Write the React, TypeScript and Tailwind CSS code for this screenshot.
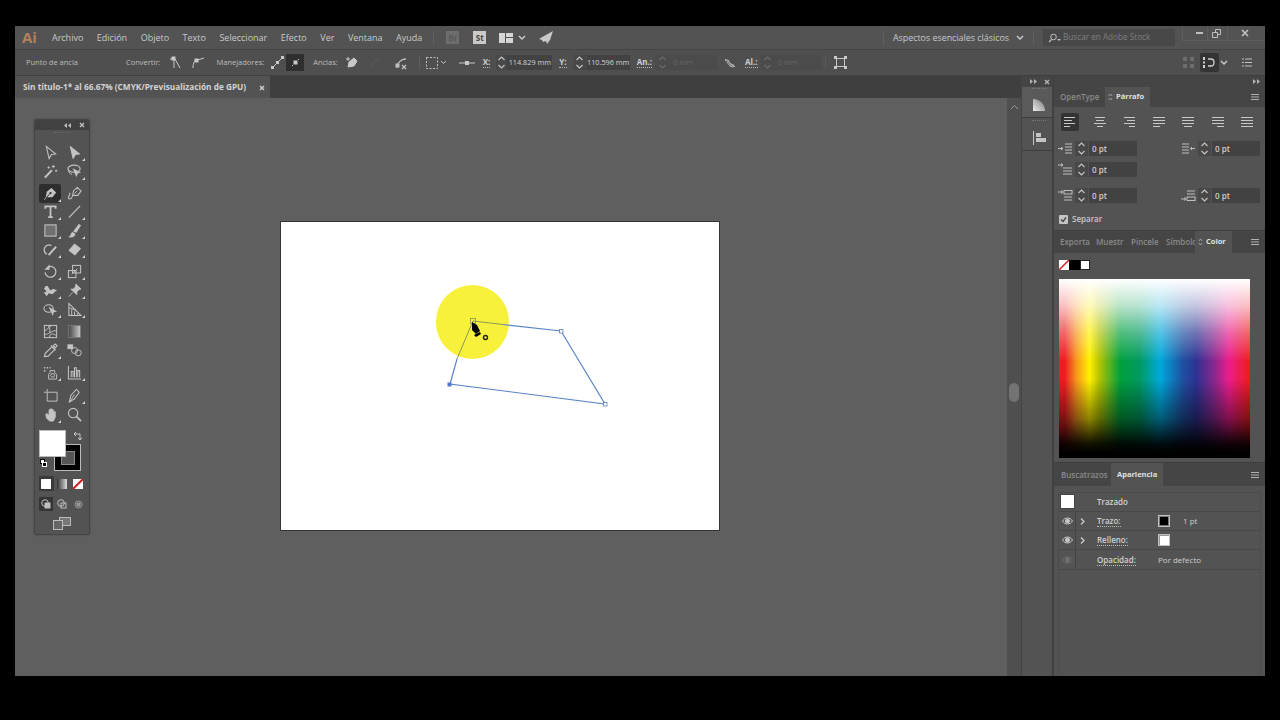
import React from "react";

const S = ({ w = 16, h = 16, vb, className = "", children }: { w?: number; h?: number; vb?: string; className?: string; children: React.ReactNode }) => (
  <svg width={w} height={h} viewBox={vb ?? `0 0 ${w} ${h}`} fill="none" stroke="currentColor" strokeWidth="1" className={`shrink-0 ${className}`}>
    {children}
  </svg>
);

const tools: { p: React.ReactNode; c?: boolean }[][] = [
  [
    { p: <path d="M3.500 1.500l10 8-4.500.6L6.500 14.500z" strokeWidth="1.100" /> },
    { p: <path d="M3.500 1.500l10 8-4.500.6L6.500 14.500z" fill="currentColor" />, c: true },
  ],
  [
    { p: <><path d="M2 14.500L9.500 6.500" strokeWidth="2.200" /><path d="M11 1v3.500M9.300 2.700h3.500M14 6v2.500M12.800 7.200h2.500M6 2.500v2.500M4.800 3.700h2.500" /></> },
    { p: <><ellipse cx="7.500" cy="5" rx="6.500" ry="3.800" strokeWidth="1.200" /><path d="M1.500 6c0 3 2 5 4 5" /><path d="M6 4.500l9 4.500-3.500 1.200-1.500 4z" fill="currentColor" stroke="none" /></>, c: true },
  ],
  [
    { p: <><path d="M3 12l1-6 5-4 5 5-4 5z" fill="currentColor" stroke="none" /><path d="M1.500 14.500l5.500-6.500" stroke="#c4c4c4" /><path d="M3.500 12.500L7.500 8" stroke="#2e2e2e" /><circle cx="8" cy="7.500" r="1.200" fill="#2e2e2e" stroke="none" /></>, c: true },
    { p: <><path d="M6 10l1-5 4-3.500 4 4-3.500 4.500z" strokeWidth="1.100" /><path d="M6 11c-2 4-5 3-4.500 1s2-2 1.500-5" strokeWidth="1.100" /><path d="M8 8l3-3" /></> },
  ],
  [
    { p: <path d="M2.500 5V2.500h11V5M8 2.500V14M5.500 14h5" strokeWidth="1.900" />, c: true },
    { p: <path d="M2 14.500L14 2" strokeWidth="1.300" />, c: true },
  ],
  [
    { p: <rect x="2" y="2" width="12" height="12" fill="#707070" strokeWidth="1.100" />, c: true },
    { p: <><path d="M6.500 9L12.500 1 15 2.500 10 10.500z" fill="currentColor" stroke="none" /><path d="M6 9.500c-3 1-1 4-5 5.500 4 1 8 0 8-3.500z" fill="currentColor" stroke="none" /></>, c: true },
  ],
  [
    { p: <><path d="M9 3.800A5 5 0 1 0 4 13" strokeWidth="1.400" /><path d="M6 14l8-9" strokeWidth="2.200" /></>, c: true },
    { p: <><path d="M1.500 9L8 1.500 15 7l-6.500 7.500z" fill="currentColor" stroke="none" /></>, c: true },
  ],
  [
    { p: <><path d="M5.500 3a5.800 5.800 0 1 1-3.300 6" strokeWidth="1.300" /><path d="M7 .5V6H1.500z" fill="currentColor" stroke="none" /></>, c: true },
    { p: <><rect x="1.500" y="7" width="8" height="7.500" strokeWidth="1.100" /><rect x="6" y="1.500" width="8.500" height="8" strokeWidth="1.100" /><path d="M5 11l6-6" /></>, c: true },
  ],
  [
    { p: <path d="M1 6c2-4 4-4 5-1l2 3 3-2 4 2-2 1-3 3-4-1-2 3-3-4 3-1-2-2z" fill="currentColor" stroke="none" />, c: true },
    { p: <path d="M9.500 1l5.500 5.500-2 .5-2.500 2.500v3L4 6.500h3l2-2.500zM6 10l-4 4.500" fill="currentColor" strokeWidth=".8" />, c: true },
  ],
  [
    { p: <><ellipse cx="6" cy="7" rx="5" ry="4" strokeWidth="1.100" /><path d="M6 5l9 5-3.500 1-1 4z" fill="currentColor" stroke="none" /></>, c: true },
    { p: <><path d="M2 1.500v13h13L2 1.500z" strokeWidth="1.100" /><path d="M5 8v6M8 10v4M11 12v2M2 6l8 3" /></>, c: true },
  ],
  [
    { p: <><rect x="1.500" y="1.500" width="13" height="13" strokeWidth="1.100" /><path d="M2 7c3 0 4-5 7-5M2 11c5 0 5-3 12-4M7 14c0-4 3-4 7-2M6 2c1 3 2 4 1 7" /></> },
    { p: <rect x="1.500" y="1.500" width="13" height="13" fill="url(#tg)" stroke="#777" /> },
  ],
  [
    { p: <path d="M1.500 14.500l1-3.500 7-7 3 3-7 7zM8.500 2.500l5 5M11 3l2-2 2 2-2 2z" strokeWidth="1.200" />, c: true },
    { p: <><rect x="1" y="2" width="5" height="4" fill="currentColor" /><circle cx="8" cy="8" r="3.200" /><circle cx="12" cy="10.500" r="3.200" /></> },
  ],
  [
    { p: <><path d="M1 3h1.500M4 3h1.500M1 6h1.500M7 3h1" strokeWidth="1.600" /><path d="M7.500 6h5v2l2 2v5H6v-5l1.500-2z" /><circle cx="10.300" cy="11" r="2" /></>, c: true },
    { p: <path d="M1.500 1v14H15M4.500 13V7h2v6M8 13V3h2v10M11.500 13V6h2v7" strokeWidth="1.100" />, c: true },
  ],
  [
    { p: <><path d="M4.500 1v3" /><path d="M1 4.500h3.500" /><path d="M4.500 4.500L15 4.500V14H4.500z" strokeWidth="1" /></> },
    { p: <><path d="M2.500 15l1.500-7 6-6.500 3 3-5 7z" strokeWidth="1.100" /><path d="M8 7l-5.500 8" /></>, c: true },
  ],
  [
    { p: <path d="M3 8l1 4 3 3h4l2-4V5l-1 0-1 3V3h-1l-.5 4V2H8l-.5 5V3h-1v6L4 7z" fill="currentColor" />, c: true },
    { p: <><circle cx="6.500" cy="6.500" r="5" strokeWidth="1.200" /><path d="M10 10l5 5" strokeWidth="1.800" /></> },
  ],
];

function ToolRow({ row, mt, active }: { row: { p: React.ReactNode; c?: boolean }[]; mt: string; active?: boolean }) {
  return (
    <div className={`flex h-[19px] items-center justify-center gap-[2px] ${mt}`}>
      {row.map((t, i) => (
        <div key={i} className={`relative flex h-[19px] w-[22px] items-center justify-center rounded-[2px] text-[#c4c4c4] ${active && i === 0 ? "bg-[#2e2e2e]" : ""}`}>
          <S vb="0 0 16 16" w={15} h={15}>{t.p}</S>
          {t.c && <span className="absolute bottom-[1px] right-0 h-0 w-0 border-b-[3px] border-l-[3px] border-b-[#d0d0d0] border-l-transparent" />}
        </div>
      ))}
    </div>
  );
}

const Spin = ({ muted }: { muted?: boolean }) => (
  <S w={9} h={15} className={muted ? "text-[#6c6c6c]" : "text-[#c4c4c4]"}>
    <path d="M1.500 5L4.500 2l3 3M1.500 10l3 3 3-3" strokeWidth="1.200" />
  </S>
);

const TabSpin = () => (
  <S w={5} h={8} className="mr-[3px] text-[#bbb]"><path d="M.8 3L2.500 1l1.700 2M.8 5l1.700 2 1.700-2" strokeWidth=".8" /></S>
);

const menus = ["Archivo", "Edición", "Objeto", "Texto", "Seleccionar", "Efecto", "Ver", "Ventana", "Ayuda"];

function MenuBar() {
  return (
    <div className="flex h-[24px] shrink-0 items-center border-b border-b-[#444] bg-[#535353] pl-[7px] text-[9px] text-[#c8c8c8]">
      <span className="mr-[15px] text-[15px] font-bold leading-none text-[#b5805a]">Ai</span>
      <div className="flex gap-[13.500px]">
        {menus.map((m) => <span key={m}>{m}</span>)}
      </div>
      <div className="ml-[11px] mr-[12px] h-[14px] w-px bg-[#606060]" />
      <div className="flex h-[13px] w-[13px] items-center justify-center bg-[#6d6d6d] text-[8px] font-bold text-[#585858]">Br</div>
      <div className="ml-[14px] flex h-[13px] w-[13px] items-center justify-center bg-[#c9c9c9] text-[8px] font-bold text-[#444]">St</div>
      <S w={14} h={10} className="ml-[13px] text-[#d5d5d5]"><path d="M0 0h6v10H0zM7 0h7v4H7zM7 5h7v5H7z" fill="currentColor" stroke="none" /></S>
      <S w={8} h={6} className="ml-[5px] text-[#d0d0d0]"><path d="M1 1l3 3 3-3" strokeWidth="1.300" /></S>
      <S w={14} h={13} className="ml-[13px] text-[#c8c8c8]"><path d="M0 8l5-3 9-5-3 9-3 4-1-3-3 1-1-2z" fill="currentColor" stroke="none" /></S>
      <div className="flex-1" />
      <div className="mr-[9px] h-[14px] w-px bg-[#606060]" />
      <span className="text-[8.900px]">Aspectos esenciales clásicos</span>
      <S w={8} h={6} className="ml-[7px] mr-[1px] text-[#d0d0d0]"><path d="M1 1l3 3 3-3" strokeWidth="1.300" /></S>
      <div className="ml-[8px] mr-[9px] h-[14px] w-px bg-[#606060]" />
      <div className="flex h-[17px] w-[132px] items-center rounded-[2px] border border-[#474747] bg-[#484848] pl-[4px] text-[8.200px] text-[#7f7f7f]">
        <S w={14} h={10} className="mr-[1px] text-[#c0c0c0]"><circle cx="5.500" cy="4" r="2.800" /><path d="M3.500 6.500L1 9" strokeWidth="1.300" /><path d="M9 6h4l-2 2z" fill="currentColor" stroke="none" /></S>
        Buscar en Adobe Stock
      </div>
      <div className="ml-[7px] flex h-[15px] self-start border-b border-l border-[#5d5d5d]">
        <div className="flex w-[24px] items-center justify-center pl-[9px]"><span className="h-[2px] w-[7px] bg-[#c0c0c0]" /></div>
        <div className="flex w-[20px] items-center justify-center border-l border-[#5d5d5d] pr-[3px]"><S w={9} h={9} className="text-[#c0c0c0]"><path d="M.5 3.500h5v5h-5zM3.500 3V.5h5v5H6" /></S></div>
        <div className="flex w-[38px] items-center justify-center border-l border-[#5d5d5d] pr-[4px]"><S w={8} h={8} className="text-[#c4c4c4]"><path d="M1 1l6 6M7 1L1 7" strokeWidth="1.500" /></S></div>
      </div>
    </div>
  );
}

const NumField = ({ v, w }: { v: string; w: string }) => (
  <div className={`flex h-[15px] ${w} items-center justify-center whitespace-nowrap bg-[#424242] text-[7.300px] text-[#d4d4d4]`}>{v}</div>
);
const U = ({ t }: { t: string }) => (
  <span className="border-b border-dotted border-[#bbb] text-[8px] font-bold leading-[10px] text-[#cfcfcf]">{t}</span>
);

function ControlBar() {
  return (
    <div className="flex h-[26px] shrink-0 items-center border-b border-b-[#3f3f3f] bg-[#4f4f4f] text-[7.500px] text-[#bdbdbd]">
      <span className="ml-[11px] w-[100px]">Punto de ancla</span>
      <span>Convertir:</span>
      <S w={12} h={13} className="ml-[9px] text-[#c8c8c8]"><path d="M5 12V2M1 3h5l5 9" /><rect x="3" y="1" width="3" height="3" fill="currentColor" /></S>
      <S w={13} h={13} className="ml-[10px] text-[#c8c8c8]"><path d="M2 12c0-6 2-8 5-8l6-2" /><rect x="4" y="3" width="3" height="3" fill="currentColor" /></S>
      <span className="ml-[12px]">Manejadores:</span>
      <div className="ml-[4px] flex h-[17px] w-[18px] items-center justify-center text-[#c8c8c8]"><S w={13} h={13}><path d="M1 12L12 1" /><rect x="5" y="5" width="3" height="3" fill="currentColor" stroke="none" /><rect x="0" y="10" width="3" height="3" fill="currentColor" stroke="none" /><rect x="10" y="0" width="3" height="3" fill="currentColor" stroke="none" /></S></div>
      <div className="flex h-[17px] w-[18px] items-center justify-center bg-[#2f2f2f] text-[#c8c8c8]"><S w={9} h={9}><rect x="2.500" y="2.500" width="4" height="4" fill="currentColor" stroke="none" /><path d="M7 2l1-1M2 7L1 8" /></S></div>
      <span className="ml-[9px]">Anclas:</span>
      <S w={14} h={14} className="ml-[7px] text-[#c8c8c8]"><path d="M3 11l1-5 5-4 3 3-3 5z" fill="currentColor" /><path d="M1 3l4 0M3 1v4" /></S>
      <S w={12} h={12} className="ml-[12px] text-[#626262]"><path d="M1 10c0-5 4-8 9-8" strokeDasharray="2 1.500" /></S>
      <S w={14} h={14} className="ml-[11px] text-[#c0c0c0]"><path d="M3 12c0-5 4-9 9-9M8 9l4 4M12 9l-4 4" strokeWidth="1.300" /><rect x="2" y="8" width="3" height="3" fill="currentColor" /></S>
      <div className="ml-[11px] h-[13px] w-px bg-[#5f5f5f]" />
      <S w={14} h={14} className="ml-[5px] text-[#c0c0c0]"><rect x="1.500" y="1.500" width="11" height="11" strokeDasharray="2 1.500" /></S>
      <S w={7} h={5} className="ml-[1px] text-[#c0c0c0]"><path d="M1 1l2.500 2.500L6 1" /></S>
      <S w={16} h={8} className="ml-[12px] text-[#c8c8c8]"><path d="M0 4h16" /><rect x="6" y="2" width="4" height="4" fill="currentColor" stroke="none" /></S>
      <span className="ml-[8px]"><U t="X:" /></span>
      <div className="ml-[6px] flex h-[15px] w-[11px] items-center justify-center bg-[#484848]"><Spin /></div>
      <NumField v="114.829 mm" w="w-[45px]" />
      <span className="ml-[7px]"><U t="Y:" /></span>
      <div className="ml-[6px] flex h-[15px] w-[14px] items-center justify-center bg-[#484848]"><Spin /></div>
      <NumField v="110.596 mm" w="w-[43px]" />
      <span className="ml-[7px]"><U t="An.:" /></span>
      <div className="ml-[3px] flex h-[15px] w-[62px] items-center bg-[#4b4b4b] pl-[3px] text-[7.500px] text-[#676767]"><Spin muted /><span className="ml-[6px]">0 mm</span></div>
      <S w={12} h={10} className="ml-[7px] text-[#b8b8b8]"><path d="M1 3l3-1 3 5 3 0-1 2-3-1L3 4M1 1l10 8" /></S>
      <span className="ml-[9px]"><U t="Al.:" /></span>
      <div className="ml-[2px] flex h-[15px] w-[61px] items-center bg-[#4b4b4b] pl-[3px] text-[7.500px] text-[#676767]"><Spin muted /><span className="ml-[6px]">0 mm</span></div>
      <div className="ml-[4px] h-[13px] w-px bg-[#5a5a5a]" />
      <S w={13} h={13} className="ml-[8px] text-[#c8c8c8]"><path d="M2.500 2.500h8v8h-8z" /><path d="M0 0h3v3H0zM10 0h3v3h-3zM0 10h3v3H0zM10 10h3v3h-3z" fill="currentColor" stroke="none" /></S>
      <div className="flex-1" />
      <S w={11} h={11} className="text-[#6d6d6d]"><path d="M0 0h4v4H0zM7 0h4v4H7zM0 7h4v4H0zM7 7h4v4H7z" fill="currentColor" stroke="none" /></S>
      <div className="ml-[6px] flex h-[19px] w-[19px] items-center justify-center rounded-[2px] bg-[#343434] text-[#d0d0d0]"><S w={13} h={11}><path d="M1 0v3M1 4.500v2M1 8v3" strokeWidth="2" /><path d="M5 2h3c4 0 4 7 0 7H5" strokeWidth="1.300" /></S></div>
      <S w={8} h={6} className="ml-[1px] text-[#d0d0d0]"><path d="M1 1l3 3 3-3" strokeWidth="1.300" /></S>
      <S w={10} h={9} className="ml-[14px] mr-[13px] text-[#c0c0c0]"><path d="M0 1h2M0 4.500h2M0 8h2M3 1h7M3 4.500h7M3 8h7" /></S>
    </div>
  );
}

function ToolsPanel() {
  return (
    <div className="absolute left-[19px] top-[21px] flex h-[416px] w-[56px] flex-col rounded-[3px] border border-[#454545] bg-[#535353] shadow-[0_0_2px_#444]">
      <div className="flex h-[10px] items-center justify-end gap-[8px] rounded-t-[3px] bg-[#414141] pr-[4px] text-[#bdbdbd]">
        <S w={7} h={5}><path d="M3 0L0 2.500 3 5zM7 0L4 2.500 7 5z" fill="currentColor" stroke="none" /></S>
        <S w={6} h={6}><path d="M1 1l4 4M5 1L1 5" strokeWidth="1.400" /></S>
      </div>
      <div className="mx-auto mt-[2px] h-[1px] w-[16px] border-t border-dotted border-[#6a6a6a]" />
      <div className="flex flex-col pt-[10px]">
        <ToolRow row={tools[0]} mt="" />
        <ToolRow row={tools[1]} mt="" />
        <ToolRow row={tools[2]} mt="mt-[3px]" active />
        <ToolRow row={tools[3]} mt="-mt-px" />
        <ToolRow row={tools[4]} mt="" />
        <ToolRow row={tools[5]} mt="" />
        <ToolRow row={tools[6]} mt="mt-[3px]" />
        <ToolRow row={tools[7]} mt="" />
        <ToolRow row={tools[8]} mt="" />
        <ToolRow row={tools[9]} mt="mt-[3px]" />
        <ToolRow row={tools[10]} mt="" />
        <ToolRow row={tools[11]} mt="mt-[3px]" />
        <ToolRow row={tools[12]} mt="mt-[4px]" />
        <ToolRow row={tools[13]} mt="" />
      </div>
      <div className="relative mt-[5px] h-[44px]">
        <div className="absolute left-[4px] top-[1px] z-10 h-[27px] w-[27px] border border-[#bbb] bg-white" />
        <div className="absolute left-[19px] top-[15px] flex h-[27px] w-[27px] items-center justify-center border border-[#bbb] bg-black">
          <div className="h-[14px] w-[14px] border border-[#888] bg-[#555] outline outline-1 outline-black" />
        </div>
        <S w={10} h={10} className="absolute left-[38px] top-[2px] text-[#c8c8c8]"><path d="M1 3h6v6M1 3l2-2M1 3l2 2M7 9L5 7M7 9l2-2" /></S>
        <div className="absolute left-[5px] top-[30px] h-[5px] w-[5px] border border-black bg-white" />
        <div className="absolute left-[7px] top-[33px] h-[5px] w-[5px] border border-white bg-black" />
      </div>
      <div className="mt-[3px] flex items-center justify-center gap-[1px]">
        <div className="flex h-[15px] w-[15px] items-center justify-center bg-[#3a3a3a]"><div className="h-[10px] w-[10px] bg-white" /></div>
        <div className="flex h-[15px] w-[15px] items-center justify-center"><div className="h-[10px] w-[10px] bg-[linear-gradient(90deg,#333,#ddd)]" /></div>
        <div className="flex h-[15px] w-[15px] items-center justify-center"><S w={10} h={10}><rect width="10" height="10" fill="#fff" stroke="none" /><path d="M0 10L10 0" stroke="#d31f26" strokeWidth="2" /></S></div>
      </div>
      <div className="mt-[6px] flex items-center justify-center gap-[2px] text-[#c0c0c0]">
        <div className="flex h-[14px] w-[14px] items-center justify-center bg-[#353535]"><S w={10} h={10}><circle cx="4" cy="4" r="3.300" /><rect x="4" y="4" width="5" height="5" fill="currentColor" /></S></div>
        <div className="flex h-[14px] w-[14px] items-center justify-center"><S w={10} h={10}><circle cx="4" cy="4" r="3.300" /><rect x="4" y="4" width="5" height="5" /></S></div>
        <div className="flex h-[14px] w-[14px] items-center justify-center text-[#9a9a9a]"><S w={9} h={9}><circle cx="4.500" cy="4.500" r="3.500" /><path d="M3 3h3v3H3z" fill="currentColor" /></S></div>
      </div>
      <div className="mt-[6px] flex justify-center text-[#bcbcbc]">
        <S w={18} h={13}><rect x="6.500" y=".5" width="11" height="8" fill="#777" /><rect x=".5" y="3.500" width="9" height="9" fill="#666" /></S>
      </div>
    </div>
  );
}

function Artboard() {
  return (
    <div className="absolute left-[265px] top-[123px] h-[310px] w-[440px] border border-[#333] bg-white">
      <div className="absolute left-[155px] top-[63px] h-[74px] w-[73px] rounded-full bg-[#f7f13c] blur-[0.7px]" />
      <svg width="440" height="310" viewBox="0 0 440 310" fill="none" className="absolute left-0 top-0">
        <path d="M222 102.500L280 109L324 182L169 162L176 137" stroke="#5b84c8" strokeWidth="1.200" />
        <path d="M176 137L192 99L222 102.500" stroke="#8f9a5a" strokeWidth="1" />
        <rect x="189.500" y="96.500" width="5" height="5" fill="none" stroke="#8a8f5a" strokeWidth=".8" />
        <rect x="278.500" y="107.500" width="3.500" height="3.500" fill="#fff" stroke="#5b84c8" strokeWidth=".8" />
        <rect x="322.500" y="180.500" width="3.500" height="3.500" fill="#fff" stroke="#5b84c8" strokeWidth=".8" />
        <rect x="166.500" y="160.500" width="4" height="4" fill="#4f78c8" />
        <path d="M191 100l5 3 3 6-4 3-4-4z" fill="#000" />
        <path d="M193 113l6-3 1 2-5 3z" fill="#000" />
        <circle cx="204.500" cy="115.500" r="2" fill="none" stroke="#222" strokeWidth="1.400" />
      </svg>
    </div>
  );
}

const Align = ({ lines, active }: { lines: string; active?: boolean }) => (
  <div className={`flex h-[18px] w-[18px] items-center justify-center rounded-[2px] ${active ? "bg-[#343434]" : ""}`}>
    <S w={14} h={12} className="text-[#c8c8c8]"><path d={lines} strokeWidth="1" /></S>
  </div>
);

const PField = ({ icon }: { icon: React.ReactNode }) => (
  <div className="flex items-center">
    <S w={15} h={14} className="mr-[1px] text-[#c0c0c0]">{icon}</S>
    <div className="ml-[1px] flex h-[15px] w-[13px] items-center justify-center bg-[#484848]"><Spin /></div>
    <div className="ml-[1px] flex h-[15px] w-[48px] items-center bg-[#424242] pl-[3px] text-[8px] font-semibold text-[#cfcfcf]">0 pt</div>
  </div>
);

const Menu3 = () => (
  <div className="flex flex-1 items-center justify-end pr-[6px]"><S w={8} h={6} className="text-[#b0b0b0]"><path d="M0 .5h8M0 3h8M0 5.500h8" /></S></div>
);

function ParagraphPanel() {
  return (
    <div className="flex h-[155px] shrink-0 flex-col border-b border-[#3f3f3f]">
      <div className="flex h-[11px] items-center justify-end bg-[#454545] pr-[5px]"><S w={7} h={5} className="text-[#b4b4b4]"><path d="M0 0l3 2.500L0 5zM4 0l3 2.500L4 5z" fill="currentColor" stroke="none" /></S></div>
      <div className="flex h-[20px] items-stretch bg-[#454545] text-[8px] font-semibold">
        <div className="flex w-[51px] items-center pl-[6px] text-[#8a8a8a]">OpenType</div>
        <div className="flex w-[45px] items-center bg-[#535353] pl-[3px] text-[7.500px] text-[#e0e0e0]"><TabSpin /><span className="font-bold">Párrafo</span></div>
        <Menu3 />
      </div>
      <div className="flex justify-between pl-[7px] pr-[9px] pt-[6px]">
        <Align active lines="M1 1.500h11M1 4.500h8M1 7.500h11M1 10.500h6" />
        <Align lines="M2 1.500h10M3 4.500h8M1 7.500h12M4 10.500h6" />
        <Align lines="M2 1.500h11M5 4.500h8M2 7.500h11M7 10.500h6" />
        <Align lines="M1 1.500h12M1 4.500h12M1 7.500h12M1 10.500h7" />
        <Align lines="M1 1.500h12M1 4.500h12M1 7.500h12M3 10.500h8" />
        <Align lines="M1 1.500h12M1 4.500h12M1 7.500h12M6 10.500h7" />
        <Align lines="M1 1.500h12M1 4.500h12M1 7.500h12M1 10.500h12" />
      </div>
      <div className="mt-[10px] flex justify-between pl-[4px] pr-[5px]">
        <PField icon={<path d="M7 2h7M7 5h7M7 8h7M7 11h7M0 6.500h4M3 5l2 1.500L3 8" />} />
        <PField icon={<path d="M1 2h7M1 5h7M1 8h7M1 11h7M10 6.500h4M11 5L9.500 6.500 11 8" />} />
      </div>
      <div className="mt-[6px] flex pl-[4px]">
        <PField icon={<path d="M5 5h9M5 8h9M5 11h9M0 2h4M3 .5L5 2 3 3.500" />} />
      </div>
      <div className="mt-[11px] flex justify-between pl-[4px] pr-[5px]">
        <PField icon={<><rect x="6" y="1.500" width="8" height="3.500" /><path d="M6 8h8M6 11h8M0 3h4M3 1.500L5 3 3 4.500" /></>} />
        <PField icon={<><rect x="6" y="8" width="8" height="3.500" /><path d="M6 2h8M6 5h8M0 10h4M3 8.500L5 10 3 11.500" /></>} />
      </div>
      <div className="mt-[10px] flex items-center pl-[5px] text-[8px] font-semibold text-[#c8c8c8]">
        <div className="mr-[4px] flex h-[9px] w-[9px] items-center justify-center rounded-[1px] bg-[#c4c4c4]"><S w={7} h={7} className="text-[#444]"><path d="M1 3.500l2 2 3-4" strokeWidth="1.300" /></S></div>
        Separar
      </div>
    </div>
  );
}

function ColorPanel() {
  const tabs = [["Exporta", "w-[36px]"], ["Muestr", "w-[35px]"], ["Pincele", "w-[35px]"], ["Símbolo", "w-[29px]"]];
  return (
    <div className="flex h-[232px] shrink-0 flex-col border-b border-[#3f3f3f]">
      <div className="flex h-[22px] items-stretch bg-[#454545] text-[8px] font-semibold">
        <div className="w-[6px]" />
        {tabs.map(([t, w]) => <div key={t} className={`${w} flex items-center whitespace-nowrap text-[#8a8a8a]`}>{t}</div>)}
        <div className="flex w-[37px] items-center bg-[#535353] pl-[3px] text-[7.500px] font-bold text-[#e0e0e0]"><TabSpin />Color</div>
        <Menu3 />
      </div>
      <div className="mt-[7px] flex h-[10px] pl-[5px]">
        <S w={10} h={10}><rect width="10" height="10" fill="#fff" stroke="none" /><path d="M0 10L10 0" stroke="#d31f26" strokeWidth="1.500" /></S>
        <div className="h-[10px] w-[11px] bg-black" />
        <div className="h-[10px] w-[10px] border border-[#222] bg-white" />
      </div>
      <div className="relative mx-[5px] mt-[9px] h-[179px] w-[191px] bg-[linear-gradient(90deg,#ed1c24_0%,#ed1c24_3%,#f7941d_9%,#fff200_16%,#b5c400_21%,#00a03c_32%,#009a60_42%,#00a9dc_53%,#1f4fa0_65%,#2e3192_72%,#92278f_82%,#ec1c8c_89%,#ed1c24_99%)]">
        <div className="absolute inset-0 bg-[linear-gradient(180deg,#ffffff_0%,rgba(255,255,255,0.72)_15%,rgba(255,255,255,0.32)_30%,rgba(255,255,255,0)_46%,rgba(0,0,0,0)_56%,rgba(0,0,0,0.45)_78%,rgba(0,0,0,0.92)_92%,#000000_97%)]" />
      </div>
    </div>
  );
}

const Eye = ({ dim }: { dim?: boolean }) => (
  <div className="flex h-full w-[17px] items-center justify-center border-r border-[#444]">
    <S w={11} h={8} className={dim ? "text-[#707070]" : "text-[#c8c8c8]"}><path d="M.5 4C3 0 8 0 10.500 4 8 8 3 8 .5 4z" /><circle cx="5.500" cy="4" r="2" fill="currentColor" /></S>
  </div>
);
const Chev = () => (
  <div className="flex w-[11px] justify-end pr-[2px]"><S w={5} h={7} className="text-[#d0d0d0]"><path d="M1 .5l3 3-3 3" strokeWidth="1.200" /></S></div>
);
const U2 = ({ t }: { t: string }) => <span className="ml-[10px] w-[61px] shrink-0"><span className="border-b border-dotted border-[#bbb] font-semibold leading-[10px]">{t}</span></span>;

function AppearancePanel() {
  return (
    <div className="flex min-h-0 flex-1 flex-col">
      <div className="flex h-[23px] shrink-0 items-stretch bg-[#454545] text-[8px] font-semibold">
        <div className="flex w-[57px] items-center pl-[7px] text-[#8a8a8a]">Buscatrazos</div>
        <div className="flex w-[52px] items-center bg-[#535353] pl-[6px] text-[7.500px] font-bold text-[#e0e0e0]">Apariencia</div>
        <Menu3 />
      </div>
      <div className="mx-[4px] mt-[6px] flex flex-1 flex-col border border-b-0 border-[#4c4c4c] text-[8px] text-[#cfcfcf]">
        <div className="flex h-[19px] shrink-0 items-center border-b border-[#484848] pb-[1px]">
          <div className="ml-[1px] h-[15px] w-[15px] border border-[#444] bg-white" />
          <span className="ml-[22px] font-semibold">Trazado</span>
        </div>
        <div className="flex h-[19px] shrink-0 items-center border-b border-[#484848]">
          <Eye />
          <Chev />
          <U2 t="Trazo:" />
          <div className="flex h-[12px] w-[12px] items-center justify-center border border-[#c0c0c0] bg-[#777]"><div className="h-[8px] w-[8px] bg-black" /></div>
          <span className="ml-[13px]">1 pt</span>
        </div>
        <div className="flex h-[19px] shrink-0 items-center border-b border-[#484848]">
          <Eye />
          <Chev />
          <U2 t="Relleno:" />
          <div className="flex h-[12px] w-[12px] items-center justify-center border border-[#c0c0c0] bg-[#999]"><div className="h-[9px] w-[9px] bg-white" /></div>
        </div>
        <div className="flex h-[20px] shrink-0 items-center border-b border-[#484848]">
          <Eye dim />
          <div className="w-[11px]" />
          <U2 t="Opacidad:" />
          <span>Por defecto</span>
        </div>
      </div>
    </div>
  );
}

export default function App() {
  return (
    <div className="flex h-[720px] w-[1280px] flex-col overflow-hidden bg-black px-[15px] pb-[44px] pt-[26px] font-['Open_Sans',sans-serif]">
      <MenuBar />
      <ControlBar />
      <div className="flex flex-1 overflow-hidden bg-[#414141]">
        <div className="flex w-[1006px] flex-col">
          <div className="flex h-[22px] shrink-0 bg-[#3f3f3f]">
            <div className="flex w-[255px] items-center bg-[#535353] pl-[8px] pt-[1px] text-[8.250px] font-bold text-[#d4d4d4]">
              Sin título-1* al 66.67% (CMYK/Previsualización de GPU)
              <S w={6} h={6} className="ml-[13px] text-[#d0d0d0]"><path d="M1 1l4 4M5 1L1 5" strokeWidth="1.400" /></S>
            </div>
          </div>
          <div className="flex flex-1">
            <div className="relative flex-1 bg-[#5f5f5f]">
              <ToolsPanel />
              <Artboard />
            </div>
            <div className="relative w-[14px] bg-[#4f4f4f]">
              <S w={9} h={6} className="absolute left-[3px] top-[6px] text-[#9a9a9a]"><path d="M1 5l3.500-3.500L8 5" /></S>
              <div className="absolute left-[2px] top-[285px] h-[19px] w-[10px] rounded-[5px] bg-[#737373]" />
            </div>
          </div>
        </div>
        <div className="flex w-[31px] flex-col border-l border-[#444] bg-[#535353]">
          <div className="flex h-[11px] items-center justify-end gap-[7px] bg-[#454545] pr-[2px] text-[#b4b4b4]">
            <S w={7} h={5}><path d="M0 0l3 2.500L0 5zM4 0l3 2.500L4 5z" fill="currentColor" stroke="none" /></S>
            <S w={6} h={6}><path d="M1 1l4 4M5 1L1 5" strokeWidth="1.400" /></S>
          </div>
          <div className="flex h-[31px] flex-col items-center border-b border-[#3e3e3e] bg-[#5a5a5a] pl-[4px]">
            <div className="mt-[1px] h-px w-[14px] border-t border-dotted border-[#777]" />
            <S w={14} h={14} className="mt-[9px]"><defs><linearGradient id="dq" x1="0" y1="1" x2="1" y2="0"><stop offset="0" stopColor="#eee" /><stop offset="1" stopColor="#777" /></linearGradient></defs><path d="M1 13V1c7 0 12 5 12 12z" fill="url(#dq)" stroke="none" /></S>
          </div>
          <div className="flex h-[33px] flex-col items-center border-b border-[#3e3e3e] pl-[4px]">
            <div className="mt-[2px] h-px w-[14px] border-t border-dotted border-[#777]" />
            <S w={13} h={14} className="mt-[10px]"><path d="M.5 0v14" stroke="#c4c4c4" /><path d="M3 2h5v4H3zM3 7h10v4H3z" fill="#c4c4c4" stroke="none" /></S>
          </div>
        </div>
        <div className="ml-[2px] flex flex-1 flex-col bg-[#535353]">
          <ParagraphPanel />
          <ColorPanel />
          <AppearancePanel />
        </div>
      </div>
      <svg width="0" height="0" className="absolute"><defs><linearGradient id="tg"><stop offset="0" stopColor="#444" /><stop offset="1" stopColor="#ccc" /></linearGradient></defs></svg>
    </div>
  );
}
